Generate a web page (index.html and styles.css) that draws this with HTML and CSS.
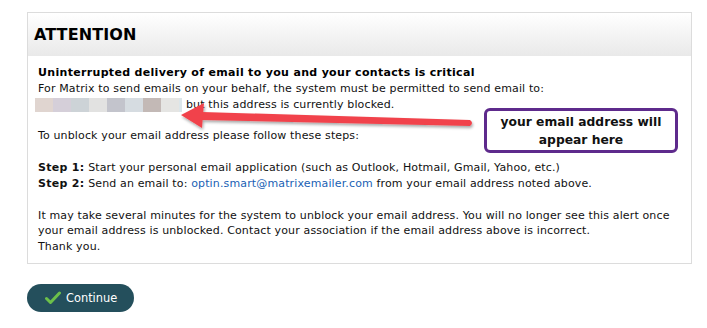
FILE: index.html
```html
<!DOCTYPE html>
<html>
<head>
<meta charset="utf-8">
<link rel="stylesheet" href="styles.css">
</head>
<body>
<div class="page">
  <div class="panel">
    <div class="panel-head"><h1 class="title">ATTENTION</h1></div>
    <div class="panel-body">
      <div class="lead">Uninterrupted delivery of email to you and your contacts is critical</div>
      <div>For Matrix to send emails on your behalf, the system must be permitted to send email to:</div>
      <div class="addr-line"><span class="blur"><i class="b1"></i><i class="b2"></i><i class="b3"></i><i class="b4"></i><i class="b5"></i><i class="b6"></i><i class="b7"></i><i class="b8"></i><i class="b9"></i></span> but this address is currently blocked.</div>
      <div class="gap"></div>
      <div>To unblock your email address please follow these steps:</div>
      <div class="gap"></div>
      <div><b class="step">Step 1:</b> Start your personal email application (such as Outlook, Hotmail, Gmail, Yahoo, etc.)</div>
      <div><b class="step">Step 2:</b> Send an email to: <a class="link">optin.smart@matrixemailer.com</a> from your email address noted above.</div>
      <div class="gap"></div>
      <div>It may take several minutes for the system to unblock your email address. You will no longer see this alert once<br>your email address is unblocked. Contact your association if the email address above is incorrect.<br>Thank you.</div>
    </div>
  </div>
  <button class="btn"><svg class="check" width="16" height="14" viewBox="0 0 16 14"><path d="M1.5 7.5 L5.5 11.5 L14.5 2" fill="none" stroke="#6cc04a" stroke-width="3" stroke-linecap="round" stroke-linejoin="round"/></svg>Continue</button>

  <svg class="arrow" width="310" height="40" viewBox="0 0 310 40">
    <defs>
      <filter id="sh" x="-10%" y="-50%" width="120%" height="200%">
        <feGaussianBlur in="SourceAlpha" stdDeviation="1.5"/>
        <feOffset dx="1" dy="2" result="o"/>
        <feComponentTransfer><feFuncA type="linear" slope="0.35"/></feComponentTransfer>
        <feMerge><feMergeNode/><feMergeNode in="SourceGraphic"/></feMerge>
      </filter>
    </defs>
    <g filter="url(#sh)">
      <path d="M24 12 L292 20 Q296 23 292 26 L24 20 Z" fill="#f1434b"/>
      <path d="M3 15 L26 3 L24 28 Z" fill="#f1434b"/>
    </g>
  </svg>
  <div class="note">your email address will<br>appear here</div>
</div>
</body>
</html>
```

FILE: styles.css
```css
html, body {
  margin: 0;
  padding: 0;
  background: #fff;
}
.page {
  position: relative;
  padding: 12px 0 0 27px;
  width: 665px;
  font-family: "DejaVu Sans", Verdana, sans-serif;
  font-size: 11px;
  color: #111;
}
.panel {
  border: 1px solid #dcdcdc;
  width: 663px;
  background: #fff;
}
.panel-head {
  height: 43px;
  background: linear-gradient(#ffffff, #e9e9e9);
  display: flex;
  align-items: center;
  padding-left: 6px;
}
.title {
  margin: 0;
  font-size: 16px;
  font-weight: bold;
  color: #000;
  letter-spacing: 0.1px;
}
.panel-body {
  padding: 9px 10px 8px 10px;
  line-height: 15.85px;
  letter-spacing: 0.14px;
}
.lead {
  font-weight: bold;
  color: #000;
  letter-spacing: 0.32px;
}
.step {
  letter-spacing: 0.3px;
}
.gap {
  height: 15.85px;
}
.addr-line {
  display: flex;
  align-items: center;
}
.blur {
  display: inline-flex;
  height: 14px;
  margin-left: -3px;
  margin-right: 4px;
}
.blur i {
  display: block;
  width: 18px;
  height: 14px;
}
.blur .b1 { background: #e0d5d0; }
.blur .b2 { background: #d5cfd9; }
.blur .b3 { background: #cdd3d7; }
.blur .b4 { background: #e2e2e1; }
.blur .b5 { background: #c3c4cc; }
.blur .b6 { background: #d6dce1; }
.blur .b7 { background: #c3b9b6; }
.blur .b8 { background: #e5e5e3; }
.blur .b9 { background: #dce6ea; width: 3px; }
.link {
  color: #1a5fb4;
  text-decoration: none;
}
.btn {
  margin-top: 20px;
  display: flex;
  align-items: center;
  gap: 5px;
  width: 107px;
  height: 28px;
  padding: 0 0 0 18px;
  border: none;
  border-radius: 14px;
  background: #244f5c;
  color: #fff;
  font-family: "DejaVu Sans", Verdana, sans-serif;
  font-size: 11.4px;
}
.arrow {
  position: absolute;
  left: 178px;
  top: 100px;
}
.note {
  position: absolute;
  left: 484px;
  top: 108px;
  width: 188px;
  height: 39px;
  border: 3px solid #5e2a8c;
  border-radius: 6px;
  background: #fff;
  font-size: 12.3px;
  font-weight: bold;
  line-height: 18px;
  text-align: center;
  color: #111;
  display: flex;
  align-items: center;
  justify-content: center;
}
```
